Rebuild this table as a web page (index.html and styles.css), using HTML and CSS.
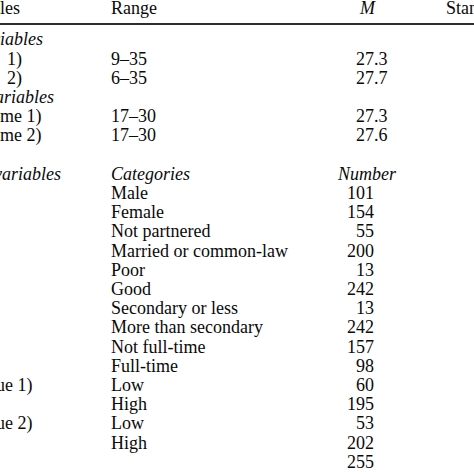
FILE: index.html
```html
<!DOCTYPE html>
<html lang="en">
<head>
<meta charset="utf-8">
<title>Table</title>
<link rel="stylesheet" href="styles.css">
</head>
<body>
<table class="tbl">
  <colgroup>
    <col class="c1"><col class="c2"><col class="c3"><col class="c4">
  </colgroup>
  <thead>
    <tr>
      <th>les</th>
      <th>Range</th>
      <th class="mh"><i>M</i></th>
      <th>Standard deviation</th>
    </tr>
  </thead>
  <tbody>
    <tr class="first"><td class="sec in7"><i>riables</i></td><td></td><td></td><td></td></tr>
    <tr><td class="ind">1)</td><td>9–35</td><td class="mean">27.3</td><td></td></tr>
    <tr><td class="ind">2)</td><td>6–35</td><td class="mean">27.7</td><td></td></tr>
    <tr><td class="sec in5"><i>ariables</i></td><td></td><td></td><td></td></tr>
    <tr><td>me 1)</td><td>17–30</td><td class="mean">27.3</td><td></td></tr>
    <tr><td>me 2)</td><td>17–30</td><td class="mean">27.6</td><td></td></tr>
    <tr><td>&nbsp;</td><td></td><td></td><td></td></tr>
    <tr><td class="sec in6"><i>variables</i></td><td><i>Categories</i></td><td class="nh"><i>Number</i></td><td></td></tr>
    <tr><td></td><td>Male</td><td class="cnt"><span>101</span></td><td></td></tr>
    <tr><td></td><td>Female</td><td class="cnt"><span>154</span></td><td></td></tr>
    <tr><td></td><td>Not partnered</td><td class="cnt"><span>55</span></td><td></td></tr>
    <tr><td></td><td>Married or common-law</td><td class="cnt"><span>200</span></td><td></td></tr>
    <tr><td></td><td>Poor</td><td class="cnt"><span>13</span></td><td></td></tr>
    <tr><td></td><td>Good</td><td class="cnt"><span>242</span></td><td></td></tr>
    <tr><td></td><td>Secondary or less</td><td class="cnt"><span>13</span></td><td></td></tr>
    <tr><td></td><td>More than secondary</td><td class="cnt"><span>242</span></td><td></td></tr>
    <tr><td></td><td>Not full-time</td><td class="cnt"><span>157</span></td><td></td></tr>
    <tr><td></td><td>Full-time</td><td class="cnt"><span>98</span></td><td></td></tr>
    <tr><td class="in4">ue 1)</td><td>Low</td><td class="cnt"><span>60</span></td><td></td></tr>
    <tr><td></td><td>High</td><td class="cnt"><span>195</span></td><td></td></tr>
    <tr><td class="in4">ue 2)</td><td>Low</td><td class="cnt"><span>53</span></td><td></td></tr>
    <tr><td></td><td>High</td><td class="cnt"><span>202</span></td><td></td></tr>
    <tr><td></td><td></td><td class="cnt"><span>255</span></td><td></td></tr>
  </tbody>
</table>
</body>
</html>
```
FILE: styles.css
```css
html, body {
  margin: 0;
  padding: 0;
  overflow: hidden;
  background: #ffffff;
}

body {
  font-family: "Liberation Serif", "Times New Roman", serif;
  font-size: 18px;
  color: #0a0a0a;
}

.tbl {
  border-collapse: separate;
  border-spacing: 0;
  table-layout: fixed;
  width: 580px;
}

.c1 { width: 111px; }
.c2 { width: 220px; }
.c3 { width: 115px; }
.c4 { width: 134px; }

th, td {
  padding: 0;
  line-height: 19.2px;
  white-space: nowrap;
  text-align: left;
  font-weight: normal;
  vertical-align: baseline;
}

thead th {
  line-height: 16px;
  padding-bottom: 7px;
  border-bottom: 2px solid #2e2e2e;
}

tbody tr.first td {
  padding-top: 5.3px;
}

.mh { padding-left: 29px; }
.nh { padding-left: 7px; }
.mean { padding-left: 25px; }

.cnt span {
  display: inline-block;
  width: 43px;
  text-align: right;
}

.ind { padding-left: 7px; }

.in7 { text-indent: -7px; }
.in6 { text-indent: -6px; }
.in5 { text-indent: -5px; }
.in4 { text-indent: -4px; }
```
